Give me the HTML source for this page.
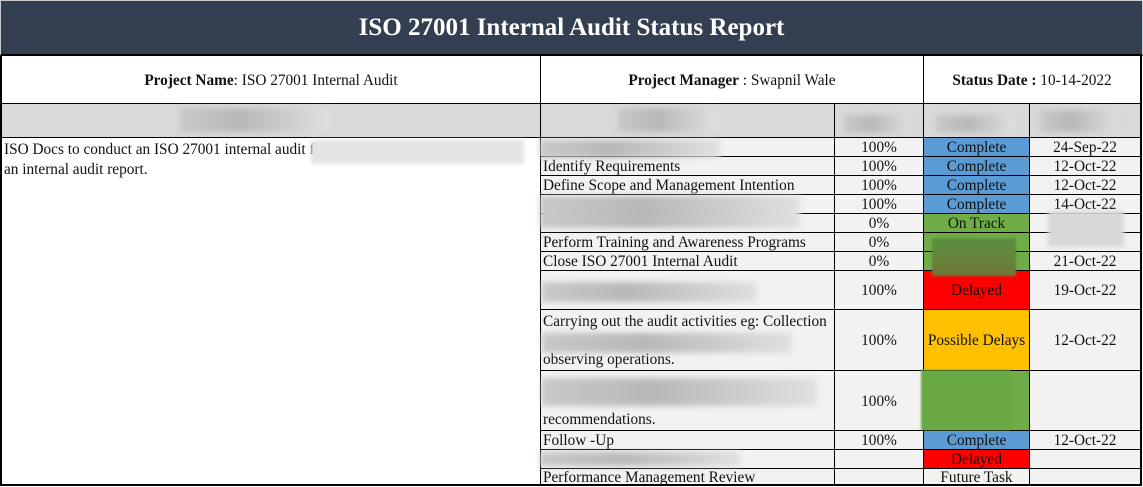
<!DOCTYPE html>
<html><head><meta charset="utf-8"><style>
*{margin:0;padding:0;box-sizing:border-box}
body{width:1143px;height:486px;background:#fff;position:relative;overflow:hidden;font-family:"Liberation Serif",serif;font-size:15.3px;color:#111}
.a{position:absolute;font-family:"Liberation Serif",serif}
.c{position:absolute;border:1px solid #000;display:flex;align-items:center;justify-content:center;white-space:nowrap;background:#f2f2f2;font-family:"Liberation Serif",serif;font-size:15.3px;padding-top:2px}
.l{justify-content:flex-start;padding-left:2px}
.b{position:absolute;filter:blur(3px);background:linear-gradient(90deg,#c8c8c8,#b8b8b8 40%,#d2d2d2 80%,#e0e0e0)}
</style></head><body>
<div class="a" style="left:0;top:0;width:1143px;height:56px;background:#333f50;border:1px solid #ccc;border-bottom:2px solid #000"></div>
<div class="a" style="left:0;top:14px;width:1143px;text-align:center;color:#fff;font-weight:bold;font-size:25px">ISO 27001 Internal Audit Status Report</div>
<div class="c" style="left:0;top:55px;width:541px;height:49px;background:#fff;border-left:2px solid #000"><span><b>Project Name</b>: ISO 27001 Internal Audit</span></div>
<div class="c" style="left:540px;top:55px;width:384px;height:49px;background:#fff"><span><b>Project Manager</b> : Swapnil Wale</span></div>
<div class="c" style="left:923px;top:55px;width:219px;height:49px;background:#fff;border-right:2px solid #000"><span><b>Status Date :</b> 10-14-2022</span></div>
<div class="c" style="left:0;top:103px;width:541px;height:35px;background:#d9d9d9;border-left:2px solid #000"></div>
<div class="c" style="left:540px;top:103px;width:295px;height:35px;background:#d9d9d9"></div>
<div class="c" style="left:834px;top:103px;width:90px;height:35px;background:#d9d9d9"></div>
<div class="c" style="left:923px;top:103px;width:107px;height:35px;background:#d9d9d9"></div>
<div class="c" style="left:1029px;top:103px;width:113px;height:35px;background:#d9d9d9;border-right:2px solid #000"></div>
<div class="b" style="left:180px;top:108px;width:150px;height:24px"></div>
<div class="b" style="left:618px;top:108px;width:100px;height:24px"></div>
<div class="b" style="left:844px;top:115px;width:68px;height:18px"></div>
<div class="b" style="left:936px;top:115px;width:80px;height:18px"></div>
<div class="b" style="left:1040px;top:110px;width:80px;height:22px"></div>
<div class="a" style="left:0;top:137px;width:541px;height:349px;border:1px solid #000;border-left:2px solid #000;border-bottom:2px solid #000;background:#fff"></div>
<div class="a" style="left:4px;top:140px;line-height:20px">ISO Docs to conduct an ISO 27001 internal audit f<br>an internal audit report.</div>
<div class="b" style="left:311px;top:140px;width:213px;height:24px;background:#e4e4e4;filter:blur(2px)"></div>
<div id="rows"></div>
<script>
var R=[[137,157,"",1,"100%","Complete","#5b9bd5","24-Sep-22"],
[156,176,"Identify Requirements",0,"100%","Complete","#5b9bd5","12-Oct-22"],
[175,195,"Define Scope and Management Intention",0,"100%","Complete","#5b9bd5","12-Oct-22"],
[194,214,"",1,"100%","Complete","#5b9bd5","14-Oct-22"],
[213,233,"",1,"0%","On Track","#70ad47",""],
[232,252,"Perform Training and Awareness Programs",0,"0%","","#70ad47",""],
[251,271,"Close ISO 27001 Internal Audit",0,"0%","","#70ad47","21-Oct-22"],
[270,310,"",1,"100%","Delayed","#ff0000","19-Oct-22"],
[309,371,"",2,"100%","Possible Delays","#ffc000","12-Oct-22"],
[370,431,"",3,"100%","","#70ad47",""],
[430,450,"Follow -Up",0,"100%","Complete","#5b9bd5","12-Oct-22"],
[449,469,"",1,"","Delayed","#ff0000",""],
[468,486,"Performance Management Review",0,"","Future Task","#f2f2f2",""]];
var h="";
R.forEach(function(r){var t=r[0],H=r[1]-r[0],bb=r[1]==486?"border-bottom:2px solid #000;":"";
h+='<div class="c l" style="left:540px;top:'+t+'px;width:295px;height:'+H+'px;'+bb+'">'+r[2]+'</div>';
h+='<div class="c" style="left:834px;top:'+t+'px;width:90px;height:'+H+'px;'+bb+'">'+r[4]+'</div>';
h+='<div class="c" style="left:923px;top:'+t+'px;width:107px;height:'+H+'px;background:'+r[6]+';'+bb+'">'+r[5]+'</div>';
h+='<div class="c" style="left:1029px;top:'+t+'px;width:113px;height:'+H+'px;border-right:2px solid #000;'+bb+'">'+r[7]+'</div>';});
document.getElementById('rows').innerHTML=h;
</script>
<div class="a" style="left:543px;top:312px;line-height:19px">Carrying out the audit activities eg: Collection</div>
<div class="a" style="left:543px;top:350px;line-height:19px">observing operations.</div>
<div class="a" style="left:543px;top:410px;line-height:19px">recommendations.</div>
<div class="b" style="left:540px;top:140px;width:180px;height:18px"></div>
<div class="b" style="left:540px;top:196px;width:260px;height:32px"></div>
<div class="b" style="left:542px;top:282px;width:215px;height:20px"></div>
<div class="b" style="left:542px;top:333px;width:250px;height:20px"></div>
<div class="b" style="left:542px;top:378px;width:275px;height:28px"></div>
<div class="b" style="left:540px;top:452px;width:200px;height:14px"></div>
<div class="a" style="left:1048px;top:211px;width:76px;height:36px;background:#d8d8d8;filter:blur(2px)"></div>
<div class="a" style="left:932px;top:238px;width:84px;height:38px;background:linear-gradient(#5a9040,#707838);filter:blur(1px)"></div>
<div class="a" style="left:921px;top:370px;width:90px;height:60px;background:#6aa845;filter:blur(1px)"></div>
</body></html>
